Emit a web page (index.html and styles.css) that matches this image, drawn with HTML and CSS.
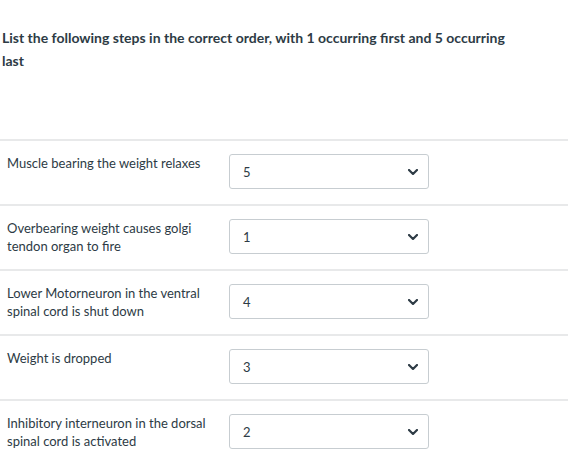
FILE: index.html
```html
<!DOCTYPE html>
<html lang="en">
<head>
<meta charset="utf-8">
<title>Ordering question</title>
<link rel="stylesheet" href="styles.css">
</head>
<body>
<div class="question">
  <p class="prompt">List the following steps in the correct order, with 1 occurring first and 5 occurring last</p>
  <div class="answers">
    <div class="row">
      <div class="label">Muscle bearing the weight relaxes</div>
      <div class="select"><span class="value">5</span><svg class="chev" viewBox="0 0 10 6" width="10" height="6"><path d="M1 1 L5 5 L9 1" /></svg></div>
    </div>
    <div class="row">
      <div class="label">Overbearing weight causes golgi tendon organ to fire</div>
      <div class="select"><span class="value">1</span><svg class="chev" viewBox="0 0 10 6" width="10" height="6"><path d="M1 1 L5 5 L9 1" /></svg></div>
    </div>
    <div class="row">
      <div class="label">Lower Motorneuron in the ventral spinal cord is shut down</div>
      <div class="select"><span class="value">4</span><svg class="chev" viewBox="0 0 10 6" width="10" height="6"><path d="M1 1 L5 5 L9 1" /></svg></div>
    </div>
    <div class="row">
      <div class="label">Weight is dropped</div>
      <div class="select"><span class="value">3</span><svg class="chev" viewBox="0 0 10 6" width="10" height="6"><path d="M1 1 L5 5 L9 1" /></svg></div>
    </div>
    <div class="row">
      <div class="label">Inhibitory interneuron in the dorsal spinal cord is activated</div>
      <div class="select"><span class="value">2</span><svg class="chev" viewBox="0 0 10 6" width="10" height="6"><path d="M1 1 L5 5 L9 1" /></svg></div>
    </div>
  </div>
</div>
</body>
</html>
```
FILE: styles.css
```css
html, body {
  margin: 0;
  padding: 0;
  background: #ffffff;
}
body {
  font-family: Lato, "Open Sans", "Liberation Sans", sans-serif;
  color: #2d3b45;
}
.question {
  padding-top: 26px;
}
.prompt {
  margin: 0 0 67px 2px;
  font-size: 14px;
  font-weight: 700;
  line-height: 23px;
  width: 520px;
}
.row {
  display: flex;
  align-items: flex-start;
  border-top: 2px solid #e8e9ea;
  padding: 13px 0 0 7px;
  height: 50px;
}
.label {
  width: 210px;
  margin-right: 12px;
  font-size: 13px;
  line-height: 18px;
  color: #2d3b45;
}
.select {
  width: 200px;
  height: 35px;
  box-sizing: border-box;
  border: 1px solid #c7cdd1;
  border-radius: 3px;
  display: flex;
  align-items: center;
  justify-content: space-between;
  padding: 0 10px 0 13px;
  font-size: 13px;
  background: #fff;
}
.chev {
  fill: none;
  stroke: #2d3b45;
  stroke-width: 2.2;
  stroke-linecap: round;
  stroke-linejoin: round;
}
```
